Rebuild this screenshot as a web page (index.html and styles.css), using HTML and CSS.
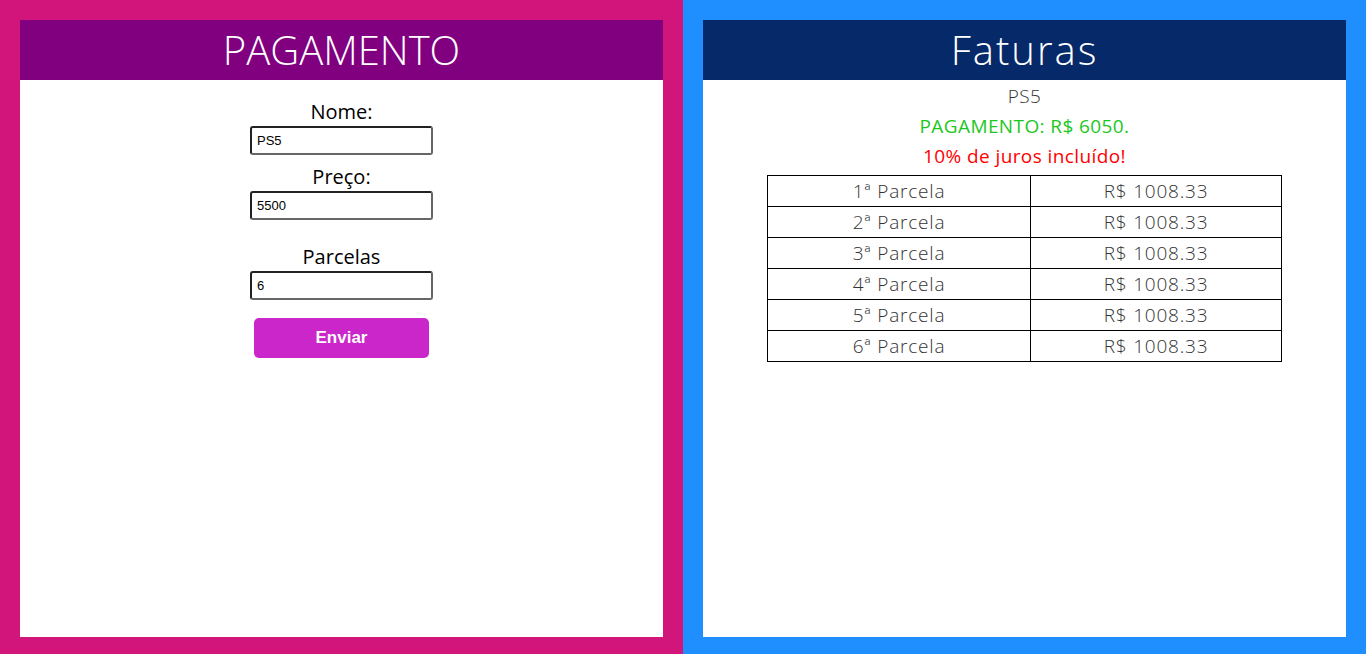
FILE: index.html
```html
<!DOCTYPE html>
<html lang="pt-BR">
<head>
<meta charset="utf-8">
<title>Pagamento</title>
<link rel="stylesheet" href="styles.css">
</head>
<body>
<div class="page">
  <section class="side side-left">
    <div class="card">
      <h1 class="title title-pay">PAGAMENTO</h1>
      <form class="form">
        <label class="label">Nome:</label>
        <input class="field" type="text" value="PS5">
        <label class="label">Preço:</label>
        <input class="field" type="text" value="5500">
        <label class="label label-gap">Parcelas</label>
        <input class="field" type="text" value="6">
        <button class="btn" type="button">Enviar</button>
      </form>
    </div>
  </section>
  <section class="side side-right">
    <div class="card">
      <h1 class="title title-inv">Faturas</h1>
      <div class="result">
        <p class="line line-name">PS5</p>
        <p class="line line-total">PAGAMENTO: R$ 6050.</p>
        <p class="line line-tax">10% de juros incluído!</p>
        <table class="table">
          <tr><td>1ª Parcela</td><td>R$ 1008.33</td></tr>
          <tr><td>2ª Parcela</td><td>R$ 1008.33</td></tr>
          <tr><td>3ª Parcela</td><td>R$ 1008.33</td></tr>
          <tr><td>4ª Parcela</td><td>R$ 1008.33</td></tr>
          <tr><td>5ª Parcela</td><td>R$ 1008.33</td></tr>
          <tr><td>6ª Parcela</td><td>R$ 1008.33</td></tr>
        </table>
      </div>
    </div>
  </section>
</div>
</body>
</html>
```

FILE: styles.css
```css
* { box-sizing: border-box; }
html, body { margin: 0; padding: 0; }
body {
  font-family: "Open Sans", "Lato", sans-serif;
  height: 654px;
  overflow: hidden;
}
.page {
  display: flex;
  height: 654px;
}
.side {
  flex: 1;
  padding: 20px 20px 17px 20px;
  display: flex;
}
.side-left { background: #d2157b; }
.side-right { background: #1f8fff; }
.card {
  flex: 1;
  background: #fff;
  display: flex;
  flex-direction: column;
}
.title {
  margin: 0;
  height: 60px;
  line-height: 60px;
  text-align: center;
  color: #fff;
  font-weight: 300;
  font-size: 40px;
}
.title-pay { background: #800080; }
.title-inv { background: #06296a; letter-spacing: 2px; }

.form {
  display: flex;
  flex-direction: column;
  align-items: center;
  padding-top: 18px;
}
.label {
  font-size: 20px;
  line-height: 28px;
  color: #000;
  font-weight: 400;
}
.label-gap { margin-top: 15px; }
.field {
  width: 183px;
  height: 29px;
  border: 2px solid #222;
  border-radius: 3px;
  border-right-color: #666;
  border-bottom-color: #666;
  padding: 0 5px;
  font-family: "Liberation Sans", Arial, sans-serif;
  font-size: 13px;
  color: #000;
  margin-bottom: 8px;
}
.btn {
  margin-top: 10px;
  width: 175px;
  height: 40px;
  border: none;
  border-radius: 5px;
  background: #ca26c9;
  color: #fff;
  font-family: "Liberation Sans", Arial, sans-serif;
  font-weight: 700;
  font-size: 17px;
}

.result {
  display: flex;
  flex-direction: column;
  align-items: center;
  padding-top: 1px;
}
.line {
  margin: 0;
  font-size: 19px;
  line-height: 30px;
  letter-spacing: 0.4px;
}
.line-name { color: #333; font-weight: 300; }
.line-total { color: #1dc71d; }
.line-tax { color: #ff0000; }
.table {
  margin-top: 4px;
  width: 515px;
  border-collapse: collapse;
}
.table td {
  border: 1px solid #000;
  height: 31px;
  padding: 0;
  text-align: center;
  font-size: 19px;
  font-weight: 300;
  letter-spacing: 0.8px;
  color: #333;
}
.table td:first-child { width: 263px; }
```
